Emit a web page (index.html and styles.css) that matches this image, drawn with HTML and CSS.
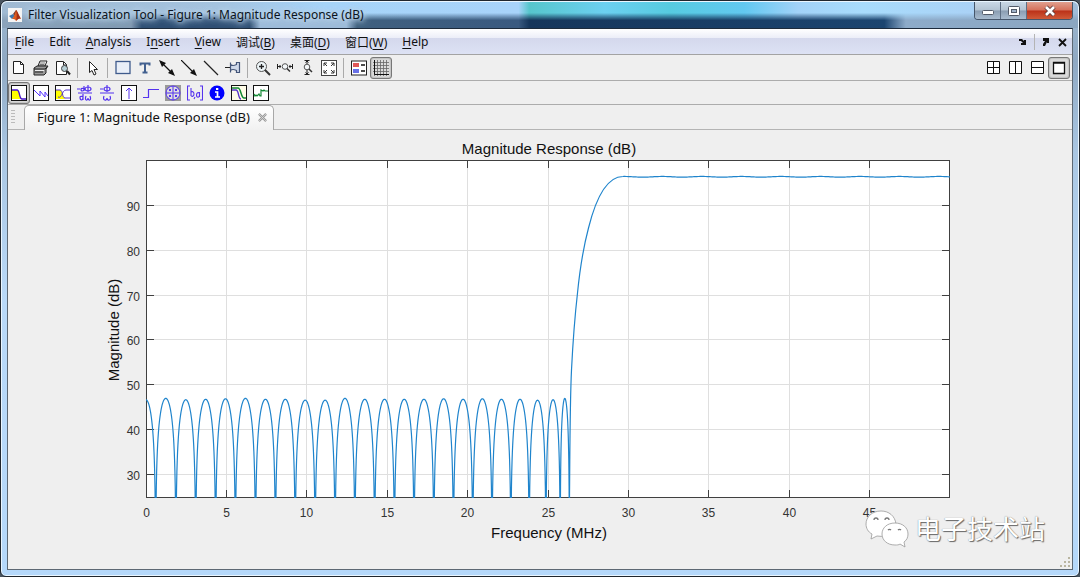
FILE: index.html
```html
<!DOCTYPE html>
<html lang="en">
<head>
    <meta charset="UTF-8">
    <meta name="viewport" content="width=device-width, initial-scale=1.0">
    <title>Filter Visualization Tool</title>
    <link rel="stylesheet" href="styles.css">
</head>
<body>
    <div class="window">
        <header class="title-bar">
            <svg class="app-icon" viewBox="0 0 14 14">
                <rect width="14" height="14" fill="#f4f4f4"/>
                <path d="M1 8l4-2 2 2-3 3z" fill="#3d77ad"/>
                <path d="M5 6l3-4 1 1-2 5z" fill="#7a3d31"/>
                <path d="M8 2c2 2 3 6 5 9-2-1-3 0-5 2-1-2-2-2-4-2 2-2 3-5 4-9z" fill="#dd5a1c"/>
                <path d="M8 2c1 3 1 7 0 11 2-2 3-3 5-2-2-3-3-7-5-9z" fill="#a32f18"/>
            </svg>
            <h1 class="title">Filter Visualization Tool - Figure 1: Magnitude Response (dB)</h1>
            <div class="window-buttons">
                <button class="win-btn" aria-label="Minimize">
                    <svg viewBox="0 0 14 12"><rect x="1.500" y="5.500" width="11" height="4" rx="1" fill="#fff" stroke="#535b69"/></svg>
                </button>
                <button class="win-btn" aria-label="Maximize">
                    <svg viewBox="0 0 14 12"><rect x="1.500" y="1.500" width="11" height="9" rx="1" fill="#fff" stroke="#535b69"/><rect x="4.500" y="4.500" width="5" height="3" fill="#9fb2c8" stroke="#535b69"/></svg>
                </button>
                <button class="win-btn win-close" aria-label="Close">
                    <svg viewBox="0 0 14 12"><path d="M3 2l8 8M11 2l-8 8" stroke="#5c3a3a" stroke-width="4.500"/><path d="M3 2l8 8M11 2l-8 8" stroke="#fff" stroke-width="2.600"/></svg>
                </button>
            </div>
        </header>

        <div class="content">
            <nav class="menu-bar">
                <button><u>F</u>ile</button>
                <button>Edit</button>
                <button><u>A</u>nalysis</button>
                <button>I<u>n</u>sert</button>
                <button><u>V</u>iew</button>
                <button>调试(<u>B</u>)</button>
                <button>桌面(<u>D</u>)</button>
                <button>窗口(<u>W</u>)</button>
                <button><u>H</u>elp</button>
                <div class="dock-buttons">
                    <button aria-label="Dock"><svg viewBox="0 0 10 10"><path d="M1 2h3l2 2V3h2v5H3V6h2L3 4H1z" fill="#111"/></svg></button>
                    <span class="dock-line"></span>
                    <button aria-label="Undock"><svg viewBox="0 0 10 10"><path d="M2 1h6v5H6V5L4 9H2V7l2-3H2z" fill="#111"/></svg></button>
                    <button aria-label="Close figure"><svg viewBox="0 0 10 10"><path d="M2 2l7 7M9 2l-7 7" stroke="#111" stroke-width="1.800"/></svg></button>
                </div>
            </nav>

            <div class="toolbar">
                <button class="tool" aria-label="New"><svg viewBox="0 0 16 16"><path d="M2.500 1.500h7l3 3v9h-10z" fill="#fff" stroke="#222"/><path d="M9.500 1.500v3h3" fill="none" stroke="#222"/></svg></button>
                <button class="tool" aria-label="Print"><svg viewBox="0 0 16 16"><path d="M5 6l2-5h7l-2 5z" fill="#fff" stroke="#222"/><path d="M7 3h5M6.500 4.500h5" stroke="#555" stroke-width=".8"/><path d="M1 8l3-2h11l-2 3v4l-2 2H1z" fill="#999" stroke="#222"/><path d="M1 9h11l2-2M2 12h8" fill="none" stroke="#222"/><path d="M2 10.500h9" stroke="#eee"/></svg></button>
                <button class="tool" aria-label="Print preview"><svg viewBox="0 0 16 16"><path d="M1.500 1.500h7l3 3v10h-10z" fill="#fff" stroke="#222"/><path d="M8.500 2v3h3" fill="none" stroke="#222"/><circle cx="9.500" cy="8.500" r="3" fill="#b7cfd6" stroke="#444"/><path d="M12 11l3 3.500" stroke="#222" stroke-width="2"/></svg></button>
                <span class="separator"></span>
                <button class="tool" aria-label="Select"><svg viewBox="0 0 16 16"><path d="M4.500 1.500v11l2.500-2 2 4.500 2-1-2-4.500h3.500z" fill="#fff" stroke="#222"/></svg></button>
                <span class="separator"></span>
                <button class="tool" aria-label="Rectangle"><svg viewBox="0 0 16 16"><rect x="1" y="1.500" width="14" height="12" fill="#e9eff8" stroke="#3f5b8c" stroke-width="1.300"/></svg></button>
                <button class="tool" aria-label="Text"><svg viewBox="0 0 16 16"><path d="M3.500 5.500V3.500h9v2M8 4v9M5.500 12.500h5" fill="none" stroke="#42608f" stroke-width="2"/></svg></button>
                <button class="tool" aria-label="Double arrow"><svg viewBox="0 0 16 16"><path d="M2 2l12 12" stroke="#111" stroke-width="1.300"/><path d="M0 0l7 3-4 4zM16 16l-7-3 4-4z" fill="#111"/></svg></button>
                <button class="tool" aria-label="Arrow"><svg viewBox="0 0 16 16"><path d="M0 0l13 13" stroke="#111" stroke-width="1.200"/><path d="M16 16l-7-3 4-4z" fill="#111"/></svg></button>
                <button class="tool" aria-label="Line"><svg viewBox="0 0 16 16"><path d="M1 1l14 14" stroke="#222" stroke-width="1.300"/></svg></button>
                <button class="tool" aria-label="Pin"><svg viewBox="0 0 16 16"><path d="M0 7.500h6" stroke="#222"/><path d="M5.500 2.500v10M5.500 4.500c2 2 4 1 6 0V2.500h3v10h-3V10.500c-2-1-4-2-6 0" fill="#cfd9ea" stroke="#435579" stroke-width="1.200"/></svg></button>
                <span class="separator"></span>
                <button class="tool" aria-label="Zoom in"><svg viewBox="0 0 16 16"><circle cx="6.500" cy="6.500" r="5" fill="#edf5f8" stroke="#555"/><path d="M4 6.500h5M6.500 4v5" stroke="#222" stroke-width="1.300"/><path d="M10 10l5 5" stroke="#333" stroke-width="2"/></svg></button>
                <button class="tool" aria-label="Zoom X"><svg viewBox="0 0 16 16"><path d="M.5 4v5M15.500 4v5M1 6.500h3M12 6.500h3M3.500 5L2 6.500 3.500 8M12.500 5L14 6.500 12.500 8" fill="none" stroke="#222"/><circle cx="8" cy="6.500" r="2.800" fill="#f4f8fa" stroke="#555"/><path d="M10 8.500l3 3" stroke="#333" stroke-width="1.500"/></svg></button>
                <button class="tool" aria-label="Zoom Y"><svg viewBox="0 0 16 16"><path d="M5.500.5h5M5.500 14.500h5M8 1v3M8 10v4M6.500 2.500L8 1l1.500 1.500M6.500 12.500L8 14l1.500-1.500" fill="none" stroke="#222"/><circle cx="8" cy="7" r="2.800" fill="#f4f8fa" stroke="#555"/><path d="M10 9l3 3" stroke="#333" stroke-width="1.500"/></svg></button>
                <button class="tool" aria-label="Full view"><svg viewBox="0 0 16 16"><rect x=".5" y=".5" width="15" height="15" fill="#fff" stroke="#444"/><path d="M3 6V3h3M10 3h3v3M13 10v3h-3M6 13H3v-3M3 3l3 3M13 3l-3 3M13 13l-3-3M3 13l3-3" fill="none" stroke="#333"/></svg></button>
                <span class="separator"></span>
                <button class="tool" aria-label="Legend"><svg viewBox="0 0 16 16"><rect x=".5" y="1" width="15" height="14" fill="#fff" stroke="#222"/><rect x="2" y="3" width="6" height="4" fill="#e05858"/><rect x="2" y="9" width="6" height="4" fill="#6870e8"/><path d="M10 5h4M10 11h4" stroke="#111" stroke-width="1.500"/></svg></button>
                <button class="tool pressed" aria-label="Grid"><svg viewBox="0 0 16 16"><path d="M1.500 0v16M4.500 0v16M7.500 0v16M10.500 0v16M13.500 0v16M0 2.500h16M0 5.500h16M0 8.500h16M0 11.500h16" stroke="#666" stroke-width=".8"/><path d="M1.500 0v14.500H16" fill="none" stroke="#111"/></svg></button>
                <div class="layout-buttons">
                    <button class="tool" aria-label="Grid layout"><svg viewBox="0 0 16 16"><path d="M2.500 1.500h12v12h-12zM8.500 2v12M2 7.500h12" fill="#fff" stroke="#111"/></svg></button>
                    <button class="tool" aria-label="Side by side"><svg viewBox="0 0 16 16"><path d="M2.500 1.500h12v12h-12zM8.500 2v12" fill="#fff" stroke="#111"/></svg></button>
                    <button class="tool" aria-label="Stacked"><svg viewBox="0 0 16 16"><path d="M2.500 1.500h12v12h-12zM2 7.500h12" fill="#fff" stroke="#111"/></svg></button>
                    <button class="tool pressed" aria-label="Single"><svg viewBox="0 0 16 16"><path d="M2.500 2.500h11v11h-11zM2 3h12" fill="#fff" stroke="#111" stroke-width="1.300"/></svg></button>
                </div>
            </div>

            <div class="toolbar">
                <button class="tool pressed" aria-label="Magnitude response"><svg viewBox="0 0 16 16"><rect x=".5" y=".5" width="15" height="15" fill="#fff" stroke="#111"/><path d="M1 5h5c3 0 2 9 5 9H1z" fill="#ff0"/><path d="M1 5h5c3 0 2 9 5 9h4" fill="none" stroke="#41c" stroke-width="1.300"/></svg></button>
                <button class="tool" aria-label="Phase response"><svg viewBox="0 0 16 16"><rect x=".5" y=".5" width="15" height="15" fill="#fff" stroke="#111"/><path d="M1 5l6 6V6l5 6V7l3 4" fill="none" stroke="#53f"/></svg></button>
                <button class="tool" aria-label="Magnitude and phase"><svg viewBox="0 0 16 16"><rect x=".5" y=".5" width="15" height="15" fill="#fff" stroke="#111"/><path d="M1 5h4c3 0 2 9 6 9H1z" fill="#ff0"/><path d="M1 5h4c3 0 2 8 5 8h5M3 12c4 2 4-7 8-7h4" fill="none" stroke="#53c"/></svg></button>
                <button class="tool" aria-label="Group delay"><svg viewBox="0 0 16 16"><path d="M0 4h3M1 8h14M7 1v5M7 4c0-1-3-1-3 0s0 2 1.500 2S7 5 7 4M11 0v7M11 2c4 0 4 4 0 4s-4-4 0-4M6 9v6M6 12c0-1-3-1-3 0s0 3 1.500 3S6 14 6 12M9 11c-2 5 2 5 2 2 0 3 4 3 2-2" fill="none" stroke="#53e" stroke-width="1.200"/></svg></button>
                <button class="tool" aria-label="Phase delay"><svg viewBox="0 0 16 16"><path d="M1 4h3M1 8h14M8 0v7M8 2c4 0 4 4 0 4s-4-4 0-4M5 11c-2 5 3 5 3 2 0 3 5 3 3-2" fill="none" stroke="#53e" stroke-width="1.200"/></svg></button>
                <button class="tool" aria-label="Impulse response"><svg viewBox="0 0 16 16"><rect x=".5" y=".5" width="15" height="15" fill="#fff" stroke="#111"/><path d="M8 14V3M5 6l3-3 3 3" fill="none" stroke="#53e"/></svg></button>
                <button class="tool" aria-label="Step response"><svg viewBox="0 0 16 16"><path d="M0 12.500h5.500v-8H16" fill="none" stroke="#53e" stroke-width="1.200"/></svg></button>
                <button class="tool" aria-label="Pole zero plot"><svg viewBox="0 0 16 16"><rect width="16" height="16" fill="#999"/><circle cx="8" cy="8" r="7" fill="#ddd" stroke="#53e"/><path d="M1 8h14M8 1v14M4 4l2 2M6 4L4 6M10 4l2 2M12 4l-2 2M4 10l2 2M6 10l-2 2M10 10l2 2M12 10l-2 2" stroke="#53e"/></svg></button>
                <button class="tool" aria-label="Coefficients"><svg viewBox="0 0 16 16"><path d="M3 1H.5v14H3M13 1h2.500v14H13M4 3v8M4 8c0-2 3-2 3 1s-3 3-3 1M8 12l-1 2M12.500 7v5M12.500 9c0-2-3-2-3 1s3 3 3 0" fill="none" stroke="#53e" stroke-width="1.100"/></svg></button>
                <button class="tool" aria-label="Filter information"><svg viewBox="0 0 16 16"><circle cx="8" cy="8" r="7.500" fill="#00f"/><path d="M6 7h2.500v5M6 12h5" fill="none" stroke="#fff" stroke-width="1.700"/><rect x="7" y="3" width="2.300" height="2" fill="#fff"/></svg></button>
                <button class="tool" aria-label="Magnitude estimate"><svg viewBox="0 0 16 16"><rect x=".5" y=".5" width="15" height="15" fill="#fffde8" stroke="#111"/><path d="M1 5h4c3 0 2 9 5 9" fill="none" stroke="#53c" stroke-width="1.300"/><path d="M1 3h6c3 0 3 10 6 10h2" fill="none" stroke="#183" stroke-width="1.500"/></svg></button>
                <button class="tool" aria-label="Noise spectrum"><svg viewBox="0 0 16 16"><rect x=".5" y=".5" width="15" height="15" fill="#fff" stroke="#111"/><path d="M1 9l1 2 1-1 1 1 2-2 1 2h1V5l2 1 1-1 1 1h3" fill="none" stroke="#183" stroke-width="1.200"/></svg></button>
            </div>

            <div class="tab-bar">
                <span class="grip"></span>
                <div class="tab">
                    <span>Figure 1: Magnitude Response (dB)</span>
                    <button aria-label="Close tab"><svg viewBox="0 0 10 10"><path d="M1 1l8 8M9 1l-8 8" stroke="#9a9a9a" stroke-width="2.500"/><path d="M1 1l8 8M9 1l-8 8" stroke="#e8e8e8" stroke-width=".7"/></svg></button>
                </div>
                <span class="tab-rest"></span>
            </div>

            <main class="figure">
                <svg class="plot" viewBox="0 0 1064 439" role="img" aria-label="Magnitude Response (dB)">
                    <defs>
                        <clipPath id="axes-clip"><rect x="138" y="30" width="804" height="338"/></clipPath>
                    </defs>
                    <rect x="138" y="30" width="804" height="338" fill="#fff"/>
                    <path id="grid" class="grid"/>
                    <path id="ticks" class="ticks"/>
                    <rect class="axes" x="138.500" y="30.500" width="803" height="337"/>
                    <path id="curve" class="curve" clip-path="url(#axes-clip)"/>
                    <g id="labels" class="tick-labels"></g>
                    <text class="axis-title" x="541" y="24">Magnitude Response (dB)</text>
                    <text class="axis-title" x="541" y="408">Frequency (MHz)</text>
                    <text class="axis-title" transform="translate(111 200) rotate(-90)">Magnitude (dB)</text>
                </svg>
                <div class="watermark">
                    <svg viewBox="0 0 44 38">
                        <g fill="#fff" stroke="#999" stroke-width=".8">
                            <path d="M16 1C7 1 1 7 1 14c0 4 2 8 6 10l-1 5 6-3c12 2 20-4 19-12C30 6 24 1 16 1z"/>
                            <path d="M30 13c-8 0-13 5-13 11s5 11 13 11c2 0 4 0 5-1l5 3-1-5c3-2 4-5 4-8 0-6-5-11-13-11z"/>
                        </g>
                        <path d="M9 10a2 2 0 0 1 4 0M20 10a2 2 0 0 1 4 0M23 20a2 2 0 0 1 3 0M33 20a2 2 0 0 1 3 0" fill="none" stroke="#777" stroke-width="1.300"/>
                    </svg>
                    <span>电子技术站</span>
                </div>
                <svg class="resize-grip" viewBox="0 0 12 12"><path d="M9 1h2v2H9zM5 5h2v2H5zM9 5h2v2H9zM1 9h2v2H1zM5 9h2v2H5zM9 9h2v2H9z" fill="#b9b5a0"/></svg>
            </main>
        </div>
    </div>
    <script src="plot.js"></script>
</body>
</html>
```
FILE: styles.css
```css
* {
    box-sizing: border-box;
}

body {
    margin: 0;
    font-family: "Noto Sans", "Noto Sans CJK SC", sans-serif;
    font-size: 12px;
    color: #111;
    background-color: #4a5560;
}

button {
    font: inherit;
    color: inherit;
    border: none;
    background: none;
    padding: 0;
}

svg {
    display: block;
}

.window {
    min-height: 100vh;
    display: flex;
    flex-direction: column;
    padding: 0 6px 6px;
    border: 1px solid #20262e;
    border-radius: 7px 7px 6px 6px;
    box-shadow: inset 0 0 0 1px #eaf6ff;
    background: linear-gradient(#9db7d0 0, #8fa9c3 60px, #a9c6e2 150px, #b9d9f8 300px, #b5d8fa 100%);
}

/* title bar */

.title-bar {
    position: relative;
    display: flex;
    align-items: center;
    height: 27px;
    margin: 0 -5px;
    padding-left: 6px;
    border-top: 1px solid #eaf6ff;
    border-radius: 6px 6px 0 0;
    background: linear-gradient(90deg, #9fb9d2 0, #a4c3df 20%, #a6d4f8 30%, #a8d3fa 48%, #56c6cc 49%, #6cd0f0 56%, #56cbe0 62%, #62c8f0 69%, #a2d2f8 74%, #a8dcfc 80%, #aad2f6 90%, #9fbcd8 100%);
}

.title-bar::before {
    content: "";
    position: absolute;
    inset: 0;
    background: linear-gradient(90deg, #8ba3bb 0, #8099b2 12%, #2f4f74 13%, #2f4f74 23%, #9dbbd9 24%, #9dbbd9 32%, #40607f 33%, #3a5a80 48%, #16365b 49%, #1c4570 82%, #8dabc9 84%, #8ba6c1 100%);
    mask-image: linear-gradient(transparent 42%, #000 70%);
}

.title-bar > * {
    position: relative;
}

.app-icon {
    width: 14px;
    height: 14px;
    margin-right: 6px;
}

.title {
    margin: 0;
    font-size: 12px;
    line-height: 16px;
    font-weight: 400;
    color: #0b1420;
    text-shadow: 0 0 4px #b9d2e8, 0 0 6px #b9d2e8, 0 0 8px #b9d2e8, 0 0 10px #b9d2e8;
}

.window-buttons {
    display: flex;
    align-self: flex-start;
    height: 18px;
    margin-left: auto;
    margin-right: 5px;
    border: 1px solid #46566a;
    border-top: none;
    border-radius: 0 0 4px 4px;
    overflow: hidden;
}

.win-btn {
    display: grid;
    place-items: center;
    width: 26px;
    border-right: 1px solid #5e6f84;
    background: linear-gradient(#c9d8e6 0, #b3c3d2 48%, #8a9db2 52%, #a9bccf 100%);
}

.win-btn svg {
    width: 14px;
    height: 12px;
}

.win-close {
    width: 45px;
    border-right: none;
    background: linear-gradient(#e0a08f 0, #d5705a 48%, #bb3118 52%, #d05a38 100%);
}

/* menu */

.content {
    flex: 1;
    display: flex;
    flex-direction: column;
    border: 1px solid #5d6873;
    border-top-color: #1d2b3c;
    background-color: #efefef;
}

.menu-bar {
    display: flex;
    align-items: center;
    gap: 15px;
    height: 26px;
    padding: 0 5px 0 7px;
    border-bottom: 1px solid #a3a3a3;
    background: linear-gradient(#fff 0, #eceef8 35%, #d4d8ec 36%, #dde2f4 100%);
}

.menu-bar u {
    text-underline-offset: 2px;
}

.dock-buttons {
    display: flex;
    align-items: center;
    gap: 6px;
    margin-left: auto;
}

.dock-buttons svg {
    width: 10px;
    height: 10px;
}

.dock-line {
    width: 1px;
    height: 16px;
    background-color: #b4b4b4;
}

/* toolbars */

.toolbar {
    display: flex;
    align-items: center;
    height: 26px;
    border-bottom: 1px solid #acacac;
}

.toolbar + .toolbar {
    height: 24px;
}

.tool {
    display: grid;
    place-items: center;
    width: 22px;
    height: 22px;
    border-radius: 3px;
}

.tool svg {
    width: 16px;
    height: 16px;
}

.pressed {
    border: 1px solid #777;
    background-color: #dcdcdc;
    box-shadow: inset 0 0 2px #888;
}

.separator {
    width: 1px;
    height: 20px;
    margin: 0 4px 0 3px;
    background-color: #aaa;
}

.layout-buttons {
    display: flex;
    margin-left: auto;
    padding-right: 2px;
}

/* tab */

.tab-bar {
    display: flex;
    height: 25px;
}

.grip {
    width: 16px;
    border-bottom: 1px solid #b4b4b4;
    background: repeating-linear-gradient(#bbb 0 1px, transparent 1px 3px) 3px 5px / 4px 14px no-repeat;
}

.tab {
    display: flex;
    align-items: center;
    width: 250px;
    padding: 0 6px 2px 12px;
    font-size: 13px;
    line-height: 16px;
    border: 1px solid #a8a8a8;
    border-bottom: none;
    border-radius: 5px 5px 0 0;
    background: linear-gradient(#fff, #f1f1f1);
    white-space: nowrap;
}

.tab button {
    margin-left: auto;
}

.tab button svg {
    width: 9px;
    height: 9px;
}

.tab-rest {
    flex: 1;
    border-bottom: 1px solid #b4b4b4;
}

/* figure */

.figure {
    position: relative;
    flex: 1;
}

.plot {
    width: 100%;
    height: auto;
    font-family: "Liberation Sans", sans-serif;
}

.grid {
    stroke: #dfdfdf;
    fill: none;
}

.ticks,
.axes {
    stroke: #404040;
    fill: none;
}

.curve {
    stroke: #1f84cc;
    stroke-width: 1.2;
    fill: none;
}

.tick-labels {
    font-size: 12px;
    fill: #333;
}

.axis-title {
    font-size: 15px;
    text-anchor: middle;
    fill: #111;
}

.watermark {
    position: absolute;
    right: 27px;
    bottom: 21px;
    display: flex;
    align-items: center;
    gap: 6px;
    font-size: 26px;
    line-height: 38px;
    color: #fff;
    text-shadow: 1px 1px 1px #666, 0 0 1px #777;
}

.watermark svg {
    width: 44px;
    height: 38px;
}

.resize-grip {
    position: absolute;
    right: 1px;
    bottom: 1px;
    width: 12px;
    height: 12px;
}
```
FILE: plot.js
```js
const axes = { left: 138, right: 942, top: 30, bottom: 368 };
const pxPerMHz = 16.08;
const pxPerDb = 4.475;

const xOf = f => axes.left + f * pxPerMHz;
const yOf = db => 344 - (db - 30) * pxPerDb;

// grid, ticks and tick labels
let grid = '';
let ticks = '';
let labels = '';

for (let f = 0; f <= 45; f += 5) {
    const x = Math.floor(xOf(f)) + 0.5;
    if (f > 0) {
        grid += `M${x} ${axes.top}V${axes.bottom}`;
        ticks += `M${x} ${axes.top}v8M${x} ${axes.bottom}v-8`;
    }
    labels += `<text x="${x}" y="387" text-anchor="middle">${f}</text>`;
}

for (let db = 30; db <= 90; db += 10) {
    const y = Math.floor(yOf(db)) + 0.5;
    grid += `M${axes.left} ${y}H${axes.right}`;
    ticks += `M${axes.left} ${y}h8M${axes.right} ${y}h-8`;
    labels += `<text x="132" y="${y + 5}" text-anchor="end">${db}</text>`;
}

document.getElementById('grid').setAttribute('d', grid);
document.getElementById('ticks').setAttribute('d', ticks);
document.getElementById('labels').innerHTML = labels;

// stopband: one lobe between each pair of zeros
const zeros = [-0.62, 0.6, 1.86, 3.09, 4.33, 5.56, 6.81, 8.05, 9.28, 10.52, 11.76, 12.99, 14.22,
    15.45, 16.67, 17.9, 19.12, 20.32, 21.52, 22.69, 23.83, 24.87, 25.76, 26.33];
const peaks = [46.6, 46.9, 46.6, 46.7, 46.8, 46.9, 46.7, 46.7, 46.5, 46.5, 46.9, 46.7, 46.7,
    46.7, 46.7, 46.8, 46.7, 46.8, 46.7, 46.7, 46.5, 46.6, 46.9];
const points = [];

for (let i = 0; i < peaks.length; i++) {
    const steps = 60;
    for (let s = 0; s <= steps; s++) {
        const t = Math.min(Math.max(s / steps, 0.005), 0.995);
        const f = zeros[i] + (zeros[i + 1] - zeros[i]) * t;
        points.push([xOf(f), yOf(peaks[i] + 20 * Math.log10(Math.sin(Math.PI * t)))]);
    }
}

let curve = 'M' + points.map(p => p[0].toFixed(2) + ' ' + p[1].toFixed(2)).join('L');

// transition band
curve += 'L561.500 368C562 310 562 270 563.500 240';
curve += 'C565 210 567 185 569.500 163';
curve += 'C572 138 576 115 580.500 98';
curve += 'C587 72 597 46.500 615 46.500';

// passband ripple
for (let x = 616; x <= axes.right; x++) {
    curve += `L${x} ${(46.8 - 0.35 * Math.cos((x - 615) / 39.5 * 2 * Math.PI)).toFixed(2)}`;
}

document.getElementById('curve').setAttribute('d', curve);
```
